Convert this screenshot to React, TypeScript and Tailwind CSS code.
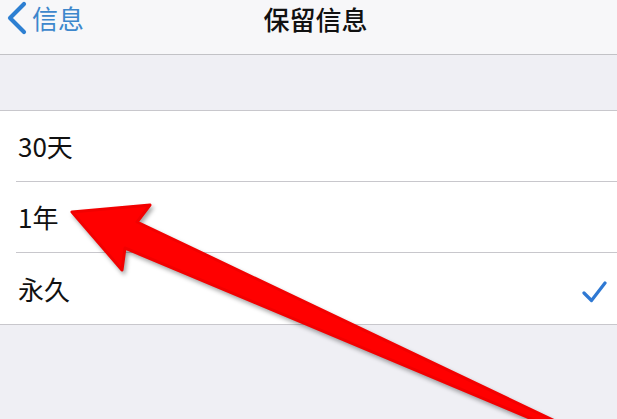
import React from "react";

const font = { fontFamily: '"Noto Sans CJK SC", "Noto Sans", sans-serif' };

function Row({ label, checked, last }: { label: string; checked?: boolean; last?: boolean }) {
  return (
    <div className="pl-4 bg-white">
      <div className={`h-[71px] flex items-center pr-[9px] ${last ? "" : "border-b border-[#c8c7cc]"}`}>
        <span className="pl-[2px] text-[26px] text-[#111111] leading-[34px] flex-1">{label}</span>
        {checked && (
          <svg width="26" height="24" viewBox="0 0 26 24" className="mt-[6px]">
            <path d="M2 13 L9.5 20.5 L23 3" fill="none" stroke="#2f79d3" strokeWidth="3.2" strokeLinecap="round" strokeLinejoin="round" />
          </svg>
        )}
      </div>
    </div>
  );
}

export default function App() {
  return (
    <div className="relative w-[617px] h-[419px] overflow-hidden bg-[#efeff4]" style={font}>
      <div className="h-[55px] bg-[#f7f7f9] border-b border-[#c2c2c6] flex items-start relative">
        <div className="flex items-center pl-[6px] pt-[1px]">
          <svg width="22" height="34" viewBox="0 0 22 34">
            <path d="M18 3 L4 17 L18 31" fill="none" stroke="#2d7fd2" strokeWidth="4.2" strokeLinecap="round" strokeLinejoin="round" />
          </svg>
          <span className="ml-[4px] text-[26px] leading-[34px] text-[#3d87cc]">信息</span>
        </div>
        <div className="absolute inset-x-0 top-[2px] flex justify-center">
          <span className="ml-[14px] text-[26px] leading-[34px] font-medium text-[#111111]">保留信息</span>
        </div>
      </div>
      <div className="h-[55px]" />
      <div className="border-t border-b border-[#c8c7cc]">
        <Row label="30天" />
        <Row label="1年" />
        <Row label="永久" checked last />
      </div>
      <svg
        className="absolute inset-0 pointer-events-none"
        width="617"
        height="419"
        viewBox="0 0 617 419"
        style={{ filter: "drop-shadow(2px 3px 2px rgba(0,0,0,0.35))" }}
      >
        <polygon
          points="72,212 150,205 137,222 557,422 539,422 125,248 122,270"
          fill="#ff0000"
          stroke="#f20000"
          strokeWidth="3"
          strokeLinejoin="round"
        />
      </svg>
    </div>
  );
}
